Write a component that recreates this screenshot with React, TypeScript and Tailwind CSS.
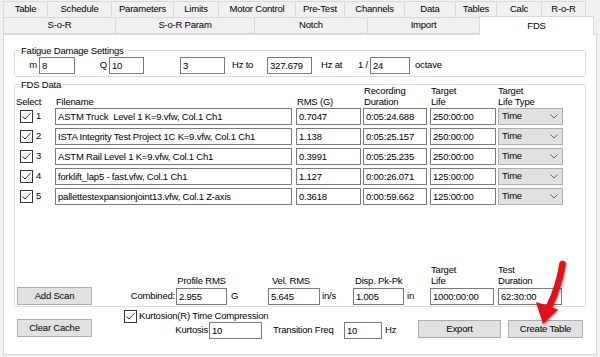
const tabsTop: [string, string][] = [
  ["Table", "w-[45px]"],
  ["Schedule", "w-[65px]"],
  ["Parameters", "w-[63px]"],
  ["Limits", "w-[46px]"],
  ["Motor Control", "w-[78px]"],
  ["Pre-Test", "w-[50px]"],
  ["Channels", "w-[61px]"],
  ["Data", "w-[52px]"],
  ["Tables", "w-[42px]"],
  ["Calc", "w-[46px]"],
  ["R-o-R", "w-[45px]"],
];

const tabsBottom: [string, string][] = [
  ["S-o-R", "w-[113px]"],
  ["S-o-R Param", "w-[140px]"],
  ["Notch", "w-[114px]"],
  ["Import", "w-[113px]"],
];

const rows = [
  ["1", "ASTM Truck  Level 1 K=9.vfw, Col.1 Ch1", "0.7047", "0:05:24.688", "250:00:00"],
  ["2", "ISTA Integrity Test Project 1C K=9.vfw, Col.1 Ch1", "1.138", "0:05:25.157", "250:00:00"],
  ["3", "ASTM Rail Level 1 K=9.vfw, Col.1 Ch1", "0.3991", "0:05:25.235", "250:00:00"],
  ["4", "forklift_lap5 - fast.vfw, Col.1 Ch1", "1.127", "0:00:26.071", "125:00:00"],
  ["5", "pallettestexpansionjoint13.vfw, Col.1 Z-axis", "0.3618", "0:00:59.662", "125:00:00"],
];

function Field({ w, value }: { w: string; value: string }) {
  return (
    <div className={`h-[17px] shrink-0 border border-[#7a7a7a] bg-white pl-[2px] leading-[15px] whitespace-pre overflow-hidden ${w}`}>
      {value}
    </div>
  );
}

function Check() {
  return (
    <svg width="13" height="13" viewBox="0 0 13 13" className="shrink-0">
      <rect x="0.5" y="0.5" width="12" height="12" fill="white" stroke="#333" />
      <path d="M2.5 6.5 L5 9 L10.5 3.2" fill="none" stroke="#333" strokeWidth="1" />
    </svg>
  );
}

function Button({ label, w }: { label: string; w: string }) {
  return (
    <div className={`h-[18px] shrink-0 border border-[#adadad] bg-[#e1e1e1] flex items-center justify-center ${w}`}>
      {label}
    </div>
  );
}

function Dropdown() {
  return (
    <div className="ml-[2px] w-[65px] h-[17px] shrink-0 border border-[#adadad] bg-[#e1e1e1] flex items-center justify-between pl-[3px] pr-[4px]">
      <span>Time</span>
      <svg width="8" height="5" viewBox="0 0 8 5">
        <path d="M0.5 0.5 L4 4 L7.5 0.5" stroke="#666" fill="none" />
      </svg>
    </div>
  );
}

export default function App() {
  return (
    <div className="relative w-[600px] h-[357px] overflow-hidden bg-[#f0f0f0] text-black text-[9.5px] tracking-[-0.2px] font-['Liberation_Sans',Arial,sans-serif]">
      {/* top tab row */}
      <div className="flex pl-[3px] pt-[1px]">
        {tabsTop.map(([t, w], i) => (
          <div
            key={t}
            className={`h-[17px] border border-[#d9d9d9] flex items-center justify-center ${w} ${i > 0 ? "-ml-px" : ""}`}
          >
            {t}
          </div>
        ))}
      </div>
      {/* second tab row */}
      <div className="flex pl-[3px] -mt-px">
        {tabsBottom.map(([t, w], i) => (
          <div
            key={t}
            className={`h-[17px] border border-[#d9d9d9] flex items-center justify-center ${w} ${i > 0 ? "-ml-px" : ""}`}
          >
            {t}
          </div>
        ))}
        <div className="relative z-10 -ml-px -mt-[1px] w-[115px] h-[19px] border border-b-0 border-[#d9d9d9] bg-white flex items-center justify-center">
          FDS
        </div>
      </div>

      {/* tab page */}
      <div className="ml-[3px] -mt-px w-[594px] h-[321px] border border-[#d9d9d9] bg-white">
        <fieldset className="ml-[10px] mt-[9px] w-[572px] h-[33px] border border-[#dcdcdc] rounded-[2px]">
          <legend className="ml-[5px] px-[1px] leading-[13px]">Fatigue Damage Settings</legend>
          <div className="flex items-center h-[17px]">
            <span className="w-[24px] text-right pr-[2px]">m</span>
            <Field w="w-[36px]" value="8" />
            <span className="w-[34px] text-right pr-[2px]">Q</span>
            <Field w="w-[35px]" value="10" />
            <span className="w-[36px]" />
            <Field w="w-[45px]" value="3" />
            <span className="w-[42px] pl-[7px]">Hz to</span>
            <Field w="w-[45px]" value="327.679" />
            <span className="w-[58px] pl-[9px] pr-[2px] flex justify-between">
              <span>Hz at</span>
              <span>1 /</span>
            </span>
            <Field w="w-[40px]" value="24" />
            <span className="pl-[5px]">octave</span>
          </div>
        </fieldset>

        <fieldset className="ml-[10px] mt-px w-[572px] h-[229px] border border-[#dcdcdc] rounded-[2px]">
          <legend className="ml-[5px] px-[1px] leading-[13px]">FDS Data</legend>
          <div className="h-[215px] flex flex-col">
            {/* headers */}
            <div className="flex items-end h-[22px] -mt-[5px] leading-[11px] pb-[1px]">
              <span className="w-[40px] pl-[1px]">Select</span>
              <span className="w-[237px] pl-[1px]">Filename</span>
              <span className="ml-[4px] w-[65px] pl-[1px]">RMS (G)</span>
              <span className="ml-[2px] w-[64px] pl-[1px]">
                Recording
                <br />
                Duration
              </span>
              <span className="ml-[3px] w-[66px] pl-[1px]">
                Target
                <br />
                Life
              </span>
              <span className="ml-[2px] w-[65px]">
                Target
                <br />
                Life Type
              </span>
            </div>
            {/* scans */}
            <div className="flex flex-col gap-[3px]">
              {rows.map(([n, file, rms, dur, life]) => (
                <div key={n} className="flex items-center">
                  <div className="w-[40px] flex items-center">
                    <span className="ml-[5px]">
                      <Check />
                    </span>
                    <span className="ml-[3px]">{n}</span>
                  </div>
                  <Field w="w-[237px]" value={file} />
                  <span className="ml-[4px]">
                    <Field w="w-[65px]" value={rms} />
                  </span>
                  <span className="ml-[2px]">
                    <Field w="w-[64px]" value={dur} />
                  </span>
                  <span className="ml-[3px]">
                    <Field w="w-[66px]" value={life} />
                  </span>
                  <Dropdown />
                </div>
              ))}
            </div>
            <div className="flex-1" />
            {/* totals labels */}
            <div className="flex items-end leading-[11px]">
              <span className="w-[161px]" />
              <span className="w-[51px] text-center">Profile RMS</span>
              <span className="w-[41px]" />
              <span className="w-[52px] pl-[4px]">Vel. RMS</span>
              <span className="w-[33px]" />
              <span className="w-[51px] pl-[2px]">Disp. Pk-Pk</span>
              <span className="w-[26px]" />
              <span className="w-[64px] pl-[1px]">
                Target
                <br />
                Life
              </span>
              <span className="w-[4px]" />
              <span className="w-[64px]">
                Test
                <br />
                Duration
              </span>
            </div>
            {/* totals values */}
            <div className="flex items-center mt-[1px] mb-[1px]">
              <span className="ml-[2px]">
                <Button label="Add Scan" w="w-[75px]" />
              </span>
              <span className="w-[84px] text-right pr-[1px]">Combined:</span>
              <Field w="w-[51px]" value="2.955" />
              <span className="w-[41px] pl-[4px]">G</span>
              <Field w="w-[52px]" value="5.645" />
              <span className="w-[33px] pl-[2px]">in/s</span>
              <Field w="w-[51px]" value="1.005" />
              <span className="w-[26px] pl-[3px]">in</span>
              <Field w="w-[64px]" value="1000:00:00" />
              <span className="w-[4px]" />
              <Field w="w-[64px]" value="62:30:00" />
            </div>
          </div>
        </fieldset>

        {/* bottom controls */}
        <div className="flex items-start">
          <span className="ml-[13px] mt-[12px]">
            <Button label="Clear Cache" w="w-[75px]" />
          </span>
          <div className="flex flex-col">
            <div className="flex items-center h-[11px] mt-[4px] pl-[32px]">
              <Check />
              <span className="ml-[2px]">Kurtosion(R) Time Compression</span>
            </div>
            <div className="flex items-center h-[17px]">
              <span className="w-[117px] text-right pr-[1px]">Kurtosis</span>
              <Field w="w-[53px]" value="10" />
              <span className="w-[82px] pl-[11px]">Transition Freq</span>
              <Field w="w-[38px]" value="10" />
              <span className="w-[36px] pl-[3px]">Hz</span>
            </div>
          </div>
          <span className="mt-[13px]">
            <Button label="Export" w="w-[83px]" />
          </span>
          <span className="mt-[13px] ml-[7px]">
            <Button label="Create Table" w="w-[75px]" />
          </span>
        </div>
      </div>

      {/* annotation arrow */}
      <svg
        className="absolute left-0 top-0 pointer-events-none drop-shadow-[1px_1px_1px_rgba(0,0,0,0.45)]"
        width="600"
        height="357"
        viewBox="0 0 600 357"
      >
        <path d="M562.5 264 Q559 286 549.5 306" stroke="#e3121a" strokeWidth="6.5" strokeLinecap="round" fill="none" />
        <polygon points="536,302 558,309.5 543,324" fill="#e3121a" />
      </svg>
    </div>
  );
}
